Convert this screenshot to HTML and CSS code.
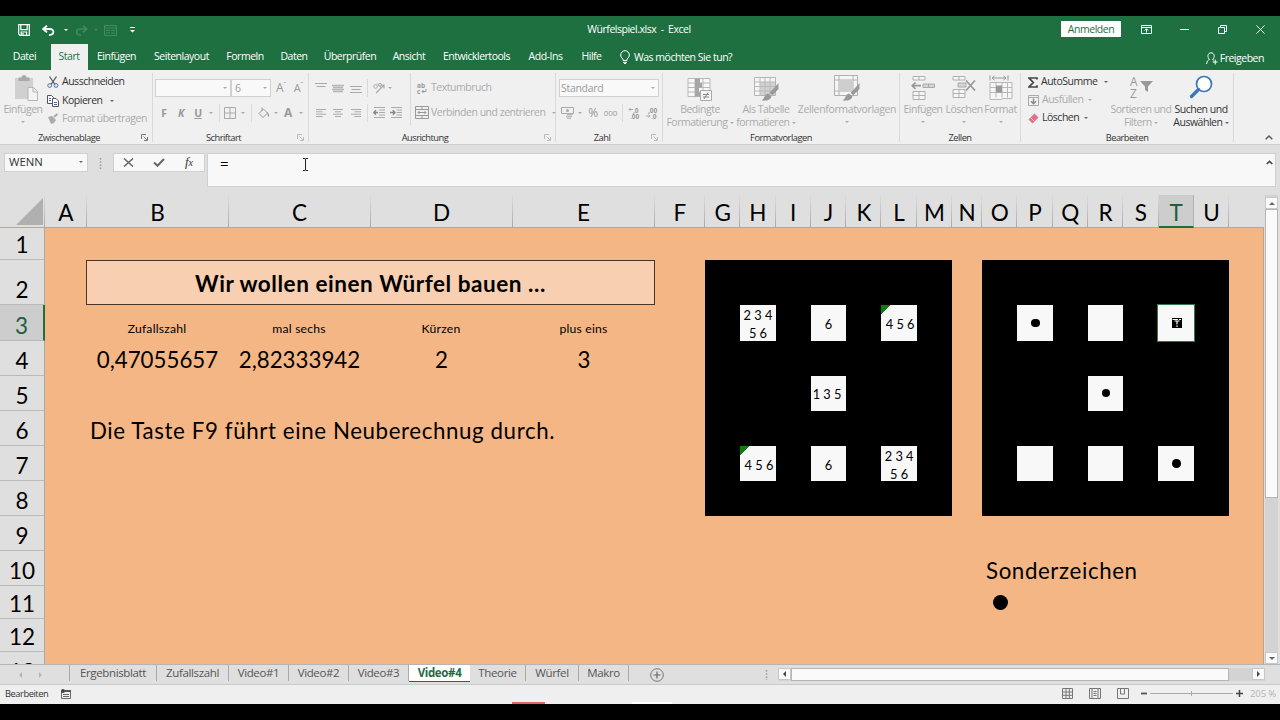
FILE: index.html
```
<!doctype html>
<html lang="de">
<head>
    <meta charset="UTF-8">
    <meta name="viewport" content="width=device-width, initial-scale=1.0">
    <title>Würfelspiel.xlsx - Excel</title>
    <link rel="stylesheet" href="styles.css">
</head>
<body>
<div class="window">
    <header class="titlebar">
        <div class="quick">
            <svg width="12" height="12" viewBox="0 0 12 12"><path d="M.7.7h10.6v10.6H2L.7 10z M2.8 1v4.6h6.4V1 M3.2 11V8h5.4v3 M5 9v2" fill="none" stroke="#fff" stroke-width="1.2"/></svg>
            <svg width="13" height="11" viewBox="0 0 13 11"><path d="M5 .8 1.2 4 5 7.4 M1.5 4h6.2c5 0 5 6-.7 6" fill="none" stroke="#fff" stroke-width="1.8"/></svg>
            <i class="arrow light"></i>
            <svg class="dim" width="13" height="11" viewBox="0 0 13 11"><path d="M8 .8 11.8 4 8 7.4 M11.5 4H5.3c-5 0-5 6 .7 6" fill="none" stroke="#458a60" stroke-width="1.6"/></svg>
            <i class="arrow dim"></i>
            <svg class="dim" width="13" height="11" viewBox="0 0 13 11"><path d="M.5.5h12v10H.5z M.5 3h12 M2 5.5h4 M7 5.5h4 M2 8h4 M7 8h4" fill="none" stroke="#458a60"/></svg>
            <svg width="5" height="6" viewBox="0 0 5 6"><path d="M0 .5h5" stroke="#fff"/><path d="M0 3h5L2.5 5.6z" fill="#fff"/></svg>
        </div>
        <div class="doc-title">Würfelspiel.xlsx&nbsp; - &nbsp;Excel</div>
        <div class="window-tools">
            <button class="login">Anmelden</button>
            <svg width="11" height="9" viewBox="0 0 11 9"><path d="M.5.5h10v8H.5z M.5 2.5h10 M5.5 7.5V4 M3.7 5.5l1.8-1.8 1.8 1.8" fill="none" stroke="#fff"/></svg>
            <svg width="9" height="9" viewBox="0 0 9 9"><path d="M0 4.5h9" stroke="#fff"/></svg>
            <svg width="9" height="9" viewBox="0 0 9 9"><path d="M.5 2.5h6v6h-6z M2.5 2V.5h6v6H7" fill="none" stroke="#fff"/></svg>
            <svg width="9" height="9" viewBox="0 0 9 9"><path d="M.5.5l8 8 M8.5.5l-8 8" stroke="#fff"/></svg>
        </div>
    </header>

    <nav class="tabs">
        <a class="tab">Datei</a>
        <a class="tab active">Start</a>
        <a class="tab">Einfügen</a>
        <a class="tab">Seitenlayout</a>
        <a class="tab">Formeln</a>
        <a class="tab">Daten</a>
        <a class="tab">Überprüfen</a>
        <a class="tab">Ansicht</a>
        <a class="tab">Entwicklertools</a>
        <a class="tab">Add-Ins</a>
        <a class="tab">Hilfe</a>
        <div class="tell-me">
            <svg width="10" height="14" viewBox="0 0 10 14"><path d="M3 10.500V9C1.500 7.800.7 6.600.7 5a4.300 4.300 0 0 1 8.600 0C9.300 6.600 8.500 7.800 7 9v1.500z M3 12.300h4 M4 13.500h2" fill="none" stroke="#fff"/></svg>
            <span>Was möchten Sie tun?</span>
        </div>
        <div class="share">
            <svg width="12" height="13" viewBox="0 0 12 13"><path d="M.6 12c.3-3 1.500-4 3-4.500C1 5.500 1.500.8 5 .8s4.300 4.600 1.600 6.700L8 8.300 M9.200 7.500v5 M6.700 10h5" fill="none" stroke="#fff"/></svg>
            <span>Freigeben</span>
        </div>
    </nav>

    <section class="ribbon">
        <div class="group clipboard">
            <div class="group-body">
                <div class="big off">
                    <svg width="24" height="26" viewBox="0 0 24 26"><path d="M1 3h18v9h-5v12H1z" fill="#d0d0d0"/><path d="M4.500 2.500h3a2.500 2.500 0 0 1 5 0h3V6h-11z" fill="#a9a9a9"/><path d="M14 12.500h5.500l4 4V25.500H14z M19 12.500V17h4.500" fill="#f4f4f4" stroke="#b4b4b4"/></svg>
                    <span>Einfügen</span>
                    <i class="arrow"></i>
                </div>
                <div class="stack">
                    <div class="item"><svg width="12" height="12" viewBox="0 0 12 12"><path d="M2.500.5l5.500 8 M9.500.5L4 8.500" stroke="#555" stroke-width="1.300"/><circle cx="2.700" cy="9.500" r="1.900" fill="none" stroke="#4472a8"/><circle cx="9" cy="9.500" r="1.900" fill="none" stroke="#4472a8"/></svg><span>Ausschneiden</span></div>
                    <div class="item"><svg width="12" height="12" viewBox="0 0 12 12"><path d="M.5.5h4l2 2v6h-6z" fill="#fff" stroke="#555"/><path d="M5.500 3.500h3.500l2.500 2.500v5.500h-6z" fill="#fff" stroke="#555"/><path d="M2 3.500h2 M2 5.500h2 M7 7.500h3 M7 9.500h3" stroke="#4472a8"/></svg><span>Kopieren</span><i class="arrow wide-gap"></i></div>
                    <div class="item off"><svg width="12" height="12" viewBox="0 0 12 12"><path d="M1 4l4-1 4 4-2 3-3 1z" fill="#ababab"/><path d="M7 4l3.500-3" stroke="#ababab" stroke-width="2"/></svg><span>Format übertragen</span></div>
                </div>
            </div>
            <div class="group-label">Zwischenablage</div>
            <svg class="launcher" width="7" height="7" viewBox="0 0 7 7"><path d="M.5 5V.5H5 M2.500 2.500l3.500 3.500 M6.500 3v3.500H3" fill="none" stroke="#777"/></svg>
        </div>

        <div class="group font">
            <div class="group-body rows">
                <div class="font-select">
                    <div class="combo"><i class="arrow"></i></div>
                    <div class="combo">6<i class="arrow"></i></div>
                    <span class="glyph">A<sup>ˆ</sup></span>
                    <span class="glyph small">A<sup>ˇ</sup></span>
                </div>
                <div class="font-tools">
                    <b>F</b><b><em>K</em></b><b><u>U</u></b><i class="arrow"></i><i class="sep"></i>
                    <svg width="12" height="12" viewBox="0 0 12 12"><path d="M.5.5h11v11H.5z M6 1v10 M1 6h10" fill="none" stroke="#aaa"/></svg>
                    <i class="arrow"></i><i class="sep"></i>
                    <svg width="12" height="12" viewBox="0 0 12 12"><path d="M1 6.500l4.500-4.500 4 4-4.500 4.500z M4 4V.5" fill="none" stroke="#999"/><path d="M9 5c2 1 2.500 3 2 5-1-.5-1.500-2-2-5z" fill="#999"/></svg>
                    <i class="arrow"></i><b class="letter">A</b><i class="arrow"></i>
                </div>
            </div>
            <div class="group-label">Schriftart</div>
            <svg class="launcher" width="7" height="7" viewBox="0 0 7 7"><path d="M.5 5V.5H5 M2.500 2.500l3.500 3.500 M6.500 3v3.500H3" fill="none" stroke="#bbb"/></svg>
        </div>

        <div class="group align">
            <div class="group-body">
                <div class="rows">
                    <div class="align-tools">
                        <svg width="12" height="12" viewBox="0 0 12 12"><path d="M0 1.500h12 M1.500 4.500h9" stroke="#aaa"/></svg>
                        <svg width="12" height="12" viewBox="0 0 12 12"><path d="M0 3.500h12 M1 5.500h10 M0 7.500h12 M1 9.500h10" stroke="#b5b5b5" stroke-width="1.500"/></svg>
                        <svg width="12" height="12" viewBox="0 0 12 12"><path d="M0 4.500h12 M1.500 7.500h9 M0 10.500h12" stroke="#aaa"/></svg>
                        <i class="sep"></i>
                        <svg width="12" height="12" viewBox="0 0 12 12"><path d="M3 11l8-8 M11 6.500V3H7.500" fill="none" stroke="#aaa" stroke-width="1.200"/><circle cx="2.500" cy="4.500" r="1.800" fill="none" stroke="#aaa"/><path d="M4 1.500l4 4" stroke="#aaa"/><circle cx="7" cy="2.800" r="1.500" fill="none" stroke="#aaa"/></svg>
                        <i class="arrow"></i>
                    </div>
                    <div class="align-tools">
                        <svg width="10" height="8" viewBox="0 0 10 8"><path d="M0 .5h10 M0 2.800h6.500 M0 5.200h10 M0 7.500h6.500" stroke="#aaa"/></svg>
                        <svg width="10" height="8" viewBox="0 0 10 8"><path d="M0 .5h10 M2 2.800h6 M0 5.200h10 M2 7.500h6" stroke="#aaa"/></svg>
                        <svg width="10" height="8" viewBox="0 0 10 8"><path d="M0 .5h10 M3.500 2.800H10 M0 5.200h10 M3.500 7.500H10" stroke="#aaa"/></svg>
                        <i class="sep"></i>
                        <svg width="12" height="11" viewBox="0 0 12 11"><path d="M1 .5h11 M6 3h6 M6 5.500h6 M6 8h6 M1 10.500h11" stroke="#aaa"/><path d="M5 5.500H1 M3 3.200L.8 5.500 3 7.800" fill="none" stroke="#888" stroke-width="1.400"/></svg>
                        <svg width="12" height="11" viewBox="0 0 12 11"><path d="M1 .5h11 M6.500 3H12 M6.500 5.500H12 M6.500 8H12 M1 10.500h11" stroke="#aaa"/><path d="M0 5.500h4.500 M2.800 3.200L5 5.500 2.800 7.800" fill="none" stroke="#888" stroke-width="1.400"/></svg>
                    </div>
                </div>
                <div class="rows wrap-tools">
                    <div class="item off"><svg width="12" height="12" viewBox="0 0 12 12"><text x="1" y="5.500" class="tiny">ab</text><text x="1" y="11.500" class="tiny">c</text><path d="M10 7v2.500H6 M7.500 8L6 9.500 7.500 11" fill="none" stroke="#999"/></svg><span>Textumbruch</span></div>
                    <div class="item off"><svg width="14" height="13" viewBox="0 0 14 13"><path d="M.5.500h13v12H.5z M.5 3.500h13 M.5 9.500h13 M7 .5v3 M7 9.500v3 M3 6.500h8 M4.500 5L3 6.500 4.500 8 M9.500 5L11 6.500 9.500 8" fill="none" stroke="#999"/></svg><span>Verbinden und zentrieren</span><i class="arrow"></i></div>
                </div>
            </div>
            <div class="group-label">Ausrichtung</div>
            <svg class="launcher" width="7" height="7" viewBox="0 0 7 7"><path d="M.5 5V.5H5 M2.500 2.500l3.500 3.500 M6.500 3v3.500H3" fill="none" stroke="#bbb"/></svg>
        </div>

        <div class="group number">
            <div class="group-body rows">
                <div class="combo wide">Standard<i class="arrow"></i></div>
                <div class="number-tools">
                    <svg width="13" height="12" viewBox="0 0 13 12"><path d="M.5.5h12v6H.5z" fill="none" stroke="#aaa"/><circle cx="6.500" cy="3.500" r="1.500" fill="#aaa"/><path d="M6 7.500h6 M5 9.500h6 M6 11.500h4" stroke="#bbb" stroke-width="1.300"/></svg>
                    <i class="arrow"></i><span class="percent">%</span><span class="zeros">000</span><i class="sep"></i>
                    <svg width="12" height="12" viewBox="0 0 12 12"><path d="M5 2.500H1 M2.500 1L1 2.500 2.500 4" fill="none" stroke="#aaa"/><text x="5" y="5.500" class="tiny">,0</text><text x="2" y="11.500" class="tiny">,00</text></svg>
                    <svg width="12" height="12" viewBox="0 0 12 12"><path d="M0 9h4 M2.500 7.500L4 9l-1.500 1.500" fill="none" stroke="#aaa"/><text x="2" y="5.500" class="tiny">,00</text><text x="5" y="11.500" class="tiny">,0</text></svg>
                </div>
            </div>
            <div class="group-label">Zahl</div>
            <svg class="launcher" width="7" height="7" viewBox="0 0 7 7"><path d="M.5 5V.5H5 M2.500 2.500l3.500 3.500 M6.500 3v3.500H3" fill="none" stroke="#bbb"/></svg>
        </div>

        <div class="group styles">
            <div class="group-body">
                <div class="big off">
                    <svg width="26" height="26" viewBox="0 0 26 26"><path d="M1 3.500h22v18H1z M1 8h22 M1 12.500h22 M1 17h22 M8 3.500v18 M16 3.500v18" fill="#f8f8f8" stroke="#b8b8b8"/><path d="M8 3.500h5v4.500H8z M8 8h7v4.500H8z M8 12.500h4V17H8z M8 17h6v4.500H8z" fill="#a6a6a6"/><path d="M13.500 15.500h11v10h-11z" fill="#f5f5f5" stroke="#aaa"/><path d="M16 19.500h6 M16 22h6 M21 17.500l-4 6.500" stroke="#888"/></svg>
                    <span>Bedingte</span>
                    <span>Formatierung <i class="arrow"></i></span>
                </div>
                <div class="big off">
                    <svg width="26" height="26" viewBox="0 0 26 26"><path d="M1.500 2.500h21v18h-21z" fill="#f5f5f5" stroke="#b5b5b5"/><path d="M7 7h15v13H7z" fill="#d2d2d2"/><path d="M1.500 7h21 M1.500 11.500h21 M1.500 16h21 M7 2.500v18 M12 2.500v18 M17 2.500v18" stroke="#b9b9b9"/><path d="M25.500 8v6l-6 6-3-2z M15 18.500l3.500 3c-1 4-6 4.500-10 4 3-1.500 3-6 6.500-7z" fill="#999"/></svg>
                    <span>Als Tabelle</span>
                    <span>formatieren <i class="arrow"></i></span>
                </div>
                <div class="big off">
                    <svg width="26" height="26" viewBox="0 0 26 26"><path d="M.5.5h23v20H.5z M.5 5h23 M.5 16h23 M5 .5v20 M19 .5v20" fill="#f5f5f5" stroke="#b0b0b0"/><path d="M5 5h14v11H5z" fill="#cecece"/><path d="M25.500 8v6l-6 6-3-2z M15 18.500l3.500 3c-1 4-6 4.500-10 4 3-1.500 3-6 6.500-7z" fill="#999"/></svg>
                    <span>Zellenformatvorlagen</span>
                    <i class="arrow"></i>
                </div>
            </div>
            <div class="group-label">Formatvorlagen</div>
        </div>

        <div class="group cells">
            <div class="group-body">
                <div class="big off">
                    <svg width="24" height="26" viewBox="0 0 24 26"><path d="M2 1.500h12V5H2z M8 1.500V5 M2 16.500h12v8H2z M8 16.500v8 M2 20.500h12" fill="#f6f6f6" stroke="#b0b0b0"/><path d="M12 9h11.500v3.500H12z M17.500 9v3.500" fill="#d5d5d5" stroke="#aaa"/><path d="M10 10.700H1 M4.500 7.500L1.200 10.700l3.300 3.300" fill="none" stroke="#999" stroke-width="1.700"/></svg>
                    <span>Einfügen</span>
                    <i class="arrow"></i>
                </div>
                <div class="big off">
                    <svg width="24" height="26" viewBox="0 0 24 26"><path d="M1 1.500h12V5H1z M7 1.500V5 M1 14.500h12v8H1z M7 14.500v8 M1 18.500h12" fill="#f6f6f6" stroke="#b0b0b0"/><path d="M6 8h8v4H6z" fill="#d5d5d5" stroke="#aaa"/><path d="M14 5.500l9 10 M23 5.500l-9 10" stroke="#999" stroke-width="1.800"/></svg>
                    <span>Löschen</span>
                    <i class="arrow"></i>
                </div>
                <div class="big off">
                    <svg width="24" height="26" viewBox="0 0 24 26"><path d="M1 .5v5 M19 .5v5 M3 3h14 M5.500 1L3 3l2.500 2 M14.500 1L17 3l-2.500 2" fill="none" stroke="#999"/><path d="M1 7.500h22v16h-9l-2 1H1z M1 12.500h22 M1 17.500h22 M7 7.500v15 M13 7.500v15 M18.500 7.500v15" fill="#f6f6f6" stroke="#b8b8b8"/><path d="M7 10.500h6v7H7z" fill="#999"/></svg>
                    <span>Format</span>
                    <i class="arrow"></i>
                </div>
            </div>
            <div class="group-label">Zellen</div>
        </div>

        <div class="group edit">
            <div class="group-body">
                <div class="stack">
                    <div class="item"><svg width="10" height="11" viewBox="0 0 10 11"><path d="M9 2.500V1H1l4.300 4.500L1 10h8V8.300" fill="none" stroke="#444" stroke-width="1.700"/></svg><span>AutoSumme</span><i class="arrow wide-gap"></i></div>
                    <div class="item off"><svg width="11" height="11" viewBox="0 0 11 11"><path d="M.5.500h10v10H.5z M.5 2.500h10" fill="none" stroke="#aaa"/><path d="M5.500 3.500v5 M3 6.200l2.500 2.500L8 6.200" fill="none" stroke="#888" stroke-width="1.400"/></svg><span>Ausfüllen</span><i class="arrow"></i></div>
                    <div class="item"><svg width="11" height="11" viewBox="0 0 11 11"><path d="M.5 6.500L6.500.5l4 4-6 6z" fill="#e0718c"/><path d="M2.500 4.500l4 4" stroke="#f5c6d0"/></svg><span>Löschen</span><i class="arrow"></i></div>
                </div>
                <div class="big off">
                    <svg width="24" height="26" viewBox="0 0 24 26"><text x="1" y="10.500" class="az">A</text><text x="1" y="22.500" class="az">Z</text><path d="M11 6h13l-5 5.500V17l-3-2v-3.500z" fill="#999"/></svg>
                    <span>Sortieren und</span>
                    <span>Filtern <i class="arrow"></i></span>
                </div>
                <div class="big">
                    <svg width="24" height="26" viewBox="0 0 24 26"><circle cx="15" cy="9" r="7.500" fill="#fff" stroke="#3b76b8" stroke-width="1.700"/><path d="M9.500 14.500L2.500 21.500" stroke="#3b76b8" stroke-width="3.300" stroke-linecap="round"/></svg>
                    <span>Suchen und</span>
                    <span>Auswählen <i class="arrow"></i></span>
                </div>
            </div>
            <div class="group-label">Bearbeiten</div>
        </div>
        <svg class="collapse" width="8" height="5" viewBox="0 0 8 5"><path d="M.7 4.300L4 1l3.300 3.300" fill="none" stroke="#555" stroke-width="1.400"/></svg>
    </section>

    <section class="formula-bar">
        <div class="name-box">WENN<i class="arrow"></i></div>
        <svg class="grip" width="3" height="11" viewBox="0 0 3 11"><path d="M1.500 0v11" stroke="#999" stroke-width="1.500" stroke-dasharray="1.500 1.700"/></svg>
        <div class="formula-buttons">
            <svg width="11" height="9" viewBox="0 0 11 9"><path d="M1 .5l9 8 M10 .5l-9 8" stroke="#666" stroke-width="1.500"/></svg>
            <svg width="12" height="9" viewBox="0 0 12 9"><path d="M1 4.500l3.500 3.300L11 1" fill="none" stroke="#666" stroke-width="2"/></svg>
            <span class="fx">f<small>x</small></span>
        </div>
        <div class="formula-input">
            <span>=</span>
            <svg class="ibeam" width="7" height="15" viewBox="0 0 7 15"><path d="M1 1.500h2l.5.5.5-.5h2 M3.500 2v11 M1 13.500h2l.5-.5.5.5h2" fill="none" stroke="#222"/></svg>
            <svg class="expand" width="7" height="5" viewBox="0 0 7 5"><path d="M.7 4L3.500 1.300 6.300 4" fill="none" stroke="#444" stroke-width="1.600"/></svg>
        </div>
    </section>

    <main class="workspace">
        <div class="sheet">
            <div class="col-heads">
                <div class="corner"><svg width="27" height="27" viewBox="0 0 27 27"><path d="M27 0v27H0z" fill="#b0b0b0"/></svg></div>
                <div>A</div><div>B</div><div>C</div><div>D</div><div>E</div><div>F</div><div>G</div><div>H</div><div>I</div><div>J</div><div>K</div><div>L</div><div>M</div><div>N</div><div>O</div><div>P</div><div>Q</div><div>R</div><div>S</div><div class="current">T</div><div>U</div>
            </div>
            <div class="sheet-body">
                <div class="row-heads">
                    <div>1</div><div>2</div><div class="current">3</div><div>4</div><div>5</div><div>6</div><div>7</div><div>8</div><div>9</div><div>10</div><div>11</div><div>12</div><div>13</div>
                </div>
                <div class="cells-area">
                    <div class="headline">Wir wollen einen Würfel bauen …</div>
                    <div class="caption b3">Zufallszahl</div>
                    <div class="caption c3">mal sechs</div>
                    <div class="caption d3">Kürzen</div>
                    <div class="caption e3">plus eins</div>
                    <div class="value b4">0,47055657</div>
                    <div class="value c4">2,82333942</div>
                    <div class="value d4">2</div>
                    <div class="value e4">3</div>
                    <div class="note b6">Die Taste F9 führt eine Neuberechnug durch.</div>
                    <div class="die left">
                        <div class="pip tl">2 3 4<br>5 6</div>
                        <div class="pip tc">6</div>
                        <div class="pip tr flag">4 5 6</div>
                        <div class="pip mc near">1 3 5</div>
                        <div class="pip bl flag">4 5 6</div>
                        <div class="pip bc">6</div>
                        <div class="pip br">2 3 4<br>5 6</div>
                    </div>
                    <div class="die right">
                        <div class="pip tl"><i class="dot"></i></div>
                        <div class="pip tc"></div>
                        <div class="pip tr selected"><svg width="10" height="10" viewBox="0 0 10 10"><path d="M0 0h10v10H0z"/><path d="M.5 1.500h5.500 M7 1.500h2 M2.500 3h5 M5 3v3.500 M5 7.500v1.500" stroke="#fff" stroke-width="1.200"/></svg></div>
                        <div class="pip mc"><i class="dot"></i></div>
                        <div class="pip bl"></div>
                        <div class="pip bc"></div>
                        <div class="pip br"><i class="dot"></i></div>
                    </div>
                    <div class="note o10">Sonderzeichen</div>
                    <div class="o11"><i class="dot large"></i></div>
                </div>
            </div>
        </div>
        <div class="vscroll">
            <div class="scroll-btn"><i class="tri up"></i></div>
            <div class="thumb"></div>
            <div class="scroll-btn"><i class="tri down"></i></div>
        </div>
    </main>

    <section class="sheet-tabs">
        <div class="nav"><i class="tri left"></i><i class="tri right"></i></div>
        <div class="sheet-tab">Ergebnisblatt</div>
        <div class="sheet-tab">Zufallszahl</div>
        <div class="sheet-tab">Video#1</div>
        <div class="sheet-tab">Video#2</div>
        <div class="sheet-tab">Video#3</div>
        <div class="sheet-tab active">Video#4</div>
        <div class="sheet-tab">Theorie</div>
        <div class="sheet-tab">Würfel</div>
        <div class="sheet-tab">Makro</div>
        <svg class="add" width="14" height="14" viewBox="0 0 14 14"><circle cx="7" cy="7" r="6.300" fill="none" stroke="#777"/><path d="M3.500 7h7 M7 3.500v7" stroke="#666" stroke-width="1.200"/></svg>
        <svg class="grip" width="3" height="10" viewBox="0 0 3 10"><path d="M1.500 0v10" stroke="#999" stroke-width="1.500" stroke-dasharray="1.500 1.700"/></svg>
        <div class="hscroll">
            <div class="scroll-btn"><i class="tri left"></i></div>
            <div class="thumb"></div>
            <div class="scroll-btn"><i class="tri right"></i></div>
        </div>
    </section>

    <footer class="status">
        <span class="mode">Bearbeiten</span>
        <svg width="10" height="10" viewBox="0 0 10 10"><path d="M.5 2.500h9v7h-9z M2 5.500h6 M2 7.500h6" fill="none" stroke="#666"/><path d="M4 1h6v2H4z" fill="#555"/><circle cx="2" cy="2" r="2" fill="#444"/></svg>
        <div class="views">
            <svg width="11" height="11" viewBox="0 0 11 11"><path d="M.5.5h10v10H.5z M.5 4h10 M.5 7.300h10 M4 .5v10 M7.300.5v10" fill="none" stroke="#777"/></svg>
            <svg width="12" height="11" viewBox="0 0 12 11"><path d="M.5.5h11v10H.5z M3 .5h6v10H3z M4.500 3.500h3 M4.500 5.500h3 M4.500 7.500h3" fill="none" stroke="#777"/></svg>
            <svg width="12" height="11" viewBox="0 0 12 11"><path d="M.5.5h11v10H.5z M3.500.5v5.500h4v-5.500" fill="none" stroke="#777"/></svg>
        </div>
        <div class="zoom">
            <svg width="102" height="9" viewBox="0 0 102 9"><path d="M0 4.500h6" stroke="#555" stroke-width="1.800"/><path d="M9 4.500h83 M50.500 2v5" stroke="#aaa"/><path d="M95 4.500h7 M98.500 1v7" stroke="#444" stroke-width="1.500"/></svg>
            <span>205 %</span>
        </div>
        <i class="peek red"></i><i class="peek white"></i>
    </footer>
</div>
</body>
</html>
```
FILE: styles.css
```
* {
    box-sizing: border-box;
}

body {
    margin: 0;
    background: #000;
    font-family: "Open Sans", "Noto Sans", sans-serif;
    font-size: 10.5px;
    letter-spacing: -0.48px;
    color: #333;
}

svg {
    display: block;
    flex: none;
}

.window {
    display: flex;
    flex-direction: column;
    width: 1280px;
    height: 720px;
    padding: 16px 0;
    overflow: hidden;
    white-space: nowrap;
}

.arrow {
    flex: none;
    display: inline-block;
    border: 2.5px solid transparent;
    border-top-color: #666;
    border-bottom: 0;
    vertical-align: middle;
}

.arrow.light {
    border-top-color: #fff;
}

.arrow.dim {
    border-top-color: #458a60;
}

.off {
    color: #ababab;
}

.off .arrow {
    border-top-color: #aaa;
}

.sep {
    width: 1px;
    height: 18px;
    background: #dadada;
}

/* title bar */
.titlebar {
    display: grid;
    grid-template-columns: 200px 1fr 219px;
    height: 28px;
    background: #1f7041;
    color: #fff;
    align-items: center;
}

.quick {
    display: grid;
    grid-template-columns: 24px 24px 11px 21px 7px 23px 21px;
    justify-items: center;
    align-items: center;
    padding-left: 12px;
}

.doc-title {
    text-align: center;
    padding-left: 17px;
    padding-bottom: 3px;
}

.window-tools {
    display: grid;
    grid-template-columns: 60px 50px 27px 48px 28px;
    justify-items: center;
    align-items: center;
    padding-bottom: 2px;
}

.login {
    width: 60px;
    height: 16px;
    padding: 0;
    border: 0;
    background: #fff;
    color: #1f7041;
    font: inherit;
    letter-spacing: inherit;
    line-height: 15px;
}

.tabs {
    display: flex;
    height: 26px;
    background: #1f7041;
    color: #fff;
}

.tab {
    width: 55px;
    line-height: 25px;
    text-align: center;
}

.tab:nth-child(1) { width: 49px; }
.tab:nth-child(2) { width: 37px; margin-left: 2px; padding-right: 1px; }
.tab:nth-child(3) { width: 57px; }
.tab:nth-child(4) { width: 73px; }
.tab:nth-child(5) { width: 54px; }
.tab:nth-child(6) { width: 44px; }
.tab:nth-child(7) { width: 68px; }
.tab:nth-child(8) { width: 50px; }
.tab:nth-child(9) { width: 85px; }
.tab:nth-child(10) { width: 53px; }
.tab:nth-child(11) { width: 39px; }

.tab.active {
    background: #f0f0f0;
    color: #1f7041;
}

.tell-me,
.share {
    display: flex;
    align-items: center;
    gap: 4px;
    margin-left: 9px;
    padding-bottom: 1px;
}

.share {
    margin-left: auto;
    padding: 2px 16px 0 0;
    gap: 2px;
}

/* ribbon */
.ribbon {
    position: relative;
    display: flex;
    height: 75px;
    background: #f0f0f0;
    border-bottom: 1px solid #cfcfcf;
}

.group {
    position: relative;
    display: flex;
    flex-direction: column;
    margin-top: 3px;
    height: 69px;
    border-right: 1px solid #d9d9d9;
}

.clipboard { width: 153px; }
.font { width: 156px; }
.align { width: 247px; }
.number { width: 107px; }
.styles { width: 237px; }
.cells { width: 121px; }
.edit { width: 213px; }

.group-body {
    display: flex;
    height: 58px;
}

.group-label {
    height: 11px;
    font-size: 9.3px;
    letter-spacing: -0.5px;
    line-height: 13px;
    text-align: center;
    padding-right: 14px;
}

.styles .group-label,
.cells .group-label,
.edit .group-label {
    padding-right: 0;
}

.launcher {
    position: absolute;
    right: 4px;
    bottom: 1px;
}

.big {
    display: flex;
    flex-direction: column;
    align-items: center;
    width: 46px;
    padding-top: 2px;
    line-height: 13px;
}

.big > svg {
    margin-bottom: 2px;
}

.clipboard .big > svg {
    margin-left: 5px;
}

.big > .arrow {
    margin-top: 5px;
}

.stack {
    display: grid;
    grid-template-rows: repeat(3, 18.5px);
}

.item {
    display: flex;
    align-items: center;
    gap: 3px;
}

.item span {
    padding-bottom: 2px;
}

.clipboard .stack {
    margin-left: 1px;
}

.item .arrow {
    margin-left: 2px;
}

.item .arrow.wide-gap {
    margin-left: 4px;
}

.rows {
    display: grid;
    grid-template-rows: 29px 21px;
    align-content: start;
    align-items: center;
}

.font-select,
.font-tools,
.align-tools,
.number-tools {
    display: grid;
    align-items: center;
    justify-items: center;
    color: #999;
}

.font-select {
    grid-template-columns: 76px 40px 20px 15px;
    padding-left: 2px;
}

.font-tools {
    grid-template-columns: 18px 16px 18px 8px 8px 14px 12px 5px 19px 5px 20px 6px;
    padding-left: 2px;
}

.font-tools .arrow,
.align-tools .arrow,
.number-tools .arrow,
.combo .arrow {
    border-top-color: #aaa;
}

.align-tools {
    grid-template-columns: 17.5px 17.5px 17.5px 5.5px 17.5px 17.5px;
    padding-left: 3px;
}

.align-tools .arrow {
    justify-self: start;
}

.combo {
    display: flex;
    align-items: center;
    justify-content: space-between;
    width: 100%;
    height: 18px;
    padding: 0 3px;
    border: 1px solid #d0d0d0;
    background: #f9f9f9;
    color: #999;
}

.combo:first-child .arrow {
    margin-left: auto;
}

.combo.wide {
    width: 100px;
    margin-left: 3px;
    padding-left: 1px;
    letter-spacing: -0.3px;
}

.glyph {
    font-size: 12px;
    line-height: 14px;
}

.glyph sup {
    font-size: 8px;
    line-height: 0;
}

.glyph.small {
    font-size: 11px;
}

.letter {
    font-size: 12px;
}

.wrap-tools {
    height: 52px;
    margin-left: 5px;
    padding-left: 4px;
    border-left: 1px solid #dadada;
}

.wrap-tools .item svg {
    width: 14px;
}

.wrap-tools .item {
    gap: 2px;
}

.wrap-tools .arrow {
    margin-left: 5px;
}

.number-tools {
    grid-template-columns: 16px 10px 16px 19px 5px 18px 18px;
    padding-left: 3px;
}

.percent {
    font-size: 12px;
}

.zeros {
    font-size: 8px;
    letter-spacing: 0;
}

.tiny {
    font-size: 6.5px;
    font-weight: 700;
    letter-spacing: 0;
    fill: #999;
}

.az {
    font-size: 12px;
    fill: #999;
}

.styles .big:nth-child(1) { width: 74px; }
.styles .big:nth-child(2) { width: 58px; }
.styles .big:nth-child(3) { width: 104px; letter-spacing: -0.35px; }
.cells .big:nth-child(2) { width: 36px; }
.cells .big:nth-child(3) { width: 37px; }

.edit .stack {
    width: 83px;
    padding-left: 7px;
    grid-template-rows: repeat(3, 18px);
}

.edit .big {
    width: 74px;
}

.edit .big:last-child {
    width: 46px;
}

.collapse {
    position: absolute;
    right: 7px;
    bottom: 4px;
}

/* formula bar */
.formula-bar {
    display: flex;
    align-items: flex-start;
    height: 50px;
    padding: 8px 4px 0;
    background: #dfdfdf;
    letter-spacing: 0;
}

.name-box {
    display: flex;
    align-items: center;
    justify-content: space-between;
    width: 84px;
    height: 19px;
    padding: 0 4px 2px 4px;
    border: 1px solid #cfcfcf;
    background: #f8f8f8;
    font-size: 11.3px;
}

.formula-bar .grip {
    margin: 5px 11px 0;
}

.formula-buttons {
    display: flex;
    align-items: center;
    justify-content: space-between;
    width: 92px;
    height: 19px;
    padding: 0 11px 1px 9px;
    border: 1px solid #cfcfcf;
    background: #f8f8f8;
}

.fx {
    font: italic 13px "Liberation Serif", serif;
}

.fx small {
    font-size: 10px;
}

.formula-input {
    position: relative;
    width: 1069px;
    height: 34px;
    margin-left: 2px;
    padding: 0 12px;
    border: 1px solid #cfcfcf;
    background: #f8f8f8;
    color: #000;
    font-size: 15px;
    line-height: 18px;
}

.ibeam {
    position: absolute;
    left: 94px;
    top: 3px;
}

.expand {
    position: absolute;
    right: 2px;
    top: 6px;
}

/* worksheet */
.workspace {
    display: flex;
    height: 469px;
    background: #dfdfdf;
}

.sheet {
    width: 1264px;
    font-family: Lato, sans-serif;
    letter-spacing: 0;
    color: #000;
    overflow: hidden;
}

.col-heads {
    display: grid;
    grid-template-columns: 45px 41.5px 142px 142px 142px 142px 50.5px repeat(7, 35.3px) 30px repeat(7, 35.3px);
    height: 33px;
    border-bottom: 1px solid #b5a79c;
    font-size: 22.5px;
    line-height: 35px;
    text-align: center;
}

.col-heads > div {
    height: 32px;
    padding-left: 1px;
    border-right: 1px solid;
    border-image: linear-gradient(#dfdfdf, #a8a8a8) 1;
}

.col-heads .corner {
    display: flex;
    justify-content: flex-end;
    padding: 3px 1px 0 0;
}

.col-heads .current {
    height: 33px;
    background: #cdcdcd;
    border-image: none;
    border-color: #b0b0b0;
    border-bottom: 2px solid #1f7041;
    color: #1d6040;
}

.sheet-body {
    display: flex;
    height: 436px;
}

.row-heads {
    display: grid;
    grid-template-rows: 32px 45px 35.5px 35px 35.2px 35.3px 35.3px 35px 35.2px 35px 33px 33px 35px;
    width: 45px;
    height: 100%;
    font-size: 22.5px;
    text-align: center;
    overflow: hidden;
}

.row-heads > div {
    display: flex;
    align-items: flex-end;
    justify-content: center;
    border-bottom: 1px solid #b9b9b9;
    border-right: 1px solid #a8a8a8;
    line-height: 29px;
}

.row-heads .current {
    background: #cdcdcd;
    border-right: 2px solid #1f7041;
    color: #1d6040;
}

.cells-area {
    display: grid;
    grid-template-columns: 41px 142px 142px 142px 143px 50px 247px 30px 247px 1fr;
    grid-template-rows: 32px 45px 35.5px 35px 35.2px 35.3px 35.3px 35px 35.2px 35px 33px 33px;
    width: 1219px;
    background: #f5b685;
    border-right: 1px solid #b9a394;
    font-size: 22.3px;
}

.headline {
    grid-area: 2 / 2 / 3 / 6;
    border: 1px solid #4a3527;
    background: #f8cfb0;
    font-weight: 700;
    font-size: 22.5px;
    letter-spacing: 0.55px;
    line-height: 45px;
    text-align: center;
}

.caption {
    font-size: 12.2px;
    letter-spacing: 0.2px;
    line-height: 47px;
    text-align: center;
}

.value {
    line-height: 38px;
    text-align: center;
    padding-left: 1px;
}

.note {
    line-height: 39px;
    padding-left: 4px;
    letter-spacing: 0.6px;
}

.b3 { grid-area: 3 / 2; }
.c3 { grid-area: 3 / 3; }
.d3 { grid-area: 3 / 4; }
.e3 { grid-area: 3 / 5; }
.b4 { grid-area: 4 / 2; }
.c4 { grid-area: 4 / 3; }
.d4 { grid-area: 4 / 4; }
.e4 { grid-area: 4 / 5; }
.b6 { grid-area: 6 / 2 / 7 / 6; }
.o10 { grid-area: 10 / 9; }
.o11 { grid-area: 11 / 9; padding: 9px 11px; }

.die {
    display: grid;
    grid-template-columns: repeat(7, 35.3px);
    grid-template-rows: 45px 35.5px 35px 35.2px 35.3px 35.3px 35px;
    background: #000;
}

.die.left { grid-area: 2 / 7 / 9 / 8; }
.die.right { grid-area: 2 / 9 / 9 / 10; }

.pip {
    display: flex;
    align-items: center;
    justify-content: center;
    background: #f8f8f8;
    font-size: 12.8px;
    line-height: 18px;
    padding-top: 2px;
    text-align: center;
}

.tl { grid-area: 2 / 2; }
.tc { grid-area: 2 / 4; }
.tr { grid-area: 2 / 6; }
.mc { grid-area: 4 / 4; }
.bl { grid-area: 6 / 2; }
.bc { grid-area: 6 / 4; }
.br { grid-area: 6 / 6; }

.near {
    padding-right: 3px;
}

.flag {
    background: linear-gradient(135deg, #107c10 6.5px, #f8f8f8 7px);
    padding-left: 2px;
}

.selected {
    outline: 1px solid #2a7a4d;
}

.right .pip {
    padding: 0 0 0 1px;
}

.dot {
    width: 8.5px;
    height: 8.5px;
    border-radius: 50%;
    background: #000;
}

.dot.large {
    display: block;
    width: 15px;
    height: 15px;
}

.vscroll {
    display: flex;
    flex-direction: column;
    width: 13px;
    margin-left: 1px;
    padding-top: 2px;
    background: #d3d3d3;
}

.scroll-btn {
    display: flex;
    align-items: center;
    justify-content: center;
    width: 13px;
    height: 12px;
    border: 1px solid #c8c8c8;
    background: #fafafa;
}

.thumb {
    background: #fafafa;
    border: 1px solid #b5b5b5;
}

.vscroll .thumb {
    height: 289px;
    margin-bottom: auto;
}

.tri {
    border: 3px solid transparent;
}

.tri.up { border-bottom-color: #666; border-top: 0; }
.tri.down { border-top-color: #666; border-bottom: 0; }
.tri.left { border-right-color: #444; border-left: 0; }
.tri.right { border-left-color: #444; border-right: 0; }

/* sheet tabs */
.sheet-tabs {
    display: flex;
    height: 21px;
    background: #dfdfdf;
    border-top: 1px solid #b5b5b5;
    border-bottom: 1px solid #cacaca;
}

.nav {
    display: flex;
    align-items: center;
    gap: 17px;
    width: 69px;
    padding-left: 19px;
}

.nav .tri.left { border-right-color: #b5b5b5; }
.nav .tri.right { border-left-color: #b5b5b5; }

.sheet-tab {
    width: 60px;
    height: 16px;
    font-size: 11.5px;
    letter-spacing: -0.35px;
    line-height: 15px;
    text-align: center;
    color: #555;
    border-right: 1px solid #aaa;
}

.sheet-tab:nth-child(2) { width: 88px; border-left: 1px solid #aaa; }
.sheet-tab:nth-child(3) { width: 72px; }
.sheet-tab:nth-child(8) { width: 56px; }
.sheet-tab:nth-child(9) { width: 53px; }
.sheet-tab:nth-child(10) { width: 50px; }

.sheet-tab.active {
    height: 17px;
    width: 61px;
    background: #fff;
    color: #1f6b45;
    font-weight: 700;
    border-right: 0;
    border-bottom: 1px solid #1f7041;
}

.add {
    margin: 3px 0 0 21px;
}

.sheet-tabs .grip {
    margin: 5px 0 0 101px;
}

.hscroll {
    display: flex;
    width: 487px;
    height: 13px;
    margin: 3px 0 0 10px;
    background: #d3d3d3;
}

.hscroll .thumb {
    width: 438px;
    margin-right: auto;
}

/* status bar */
.status {
    position: relative;
    display: flex;
    align-items: center;
    height: 19px;
    padding-bottom: 2px;
    background: #efefef;
    font-size: 9px;
    letter-spacing: -0.45px;
}

.mode {
    width: 56px;
    padding-left: 5px;
    font-size: 9.3px;
    margin-right: 5px;
}

.views {
    display: flex;
    gap: 16px;
    margin-left: auto;
}

.zoom {
    display: flex;
    align-items: center;
    gap: 7px;
    width: 139px;
    margin-left: 12px;
    color: #b5b5b5;
    font-size: 9.5px;
    letter-spacing: -0.1px;
}

.peek {
    position: absolute;
    left: 512px;
    bottom: 0;
    width: 33px;
    height: 2px;
    background: #e06666;
}

.peek.white {
    left: 632px;
    width: 40px;
    background: #fff;
}
```
